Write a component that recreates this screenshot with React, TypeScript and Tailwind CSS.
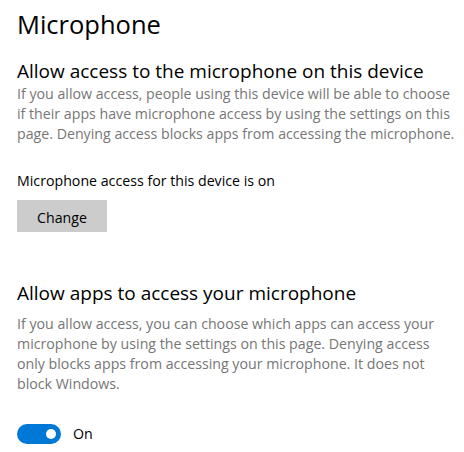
const App = () => {
  return (
    <div
      className="w-[464px] h-[452px] bg-white pl-[17px] pt-[4px] text-black overflow-hidden"
      style={{ fontFamily: '"Open Sans", "Noto Sans", sans-serif' }}
    >
      <h1 className="text-[25.5px] leading-[40px]">Microphone</h1>

      <h2 className="mt-[14px] text-[19px] leading-[26px]">
        Allow access to the microphone on this device
      </h2>
      <p className="whitespace-nowrap text-[14.2px] leading-[20px] text-[#767676]">
        If you allow access, people using this device will be able to choose
        <br />
        if their apps have microphone access by using the settings on this
        <br />
        page. Denying access blocks apps from accessing the microphone.
      </p>

      <p className="mt-[27px] text-[14.2px] leading-[20px]">
        Microphone access for this device is on
      </p>
      <button className="mt-[9px] flex w-[90px] h-[32px] items-center justify-center bg-[#cccccc] pt-[4px] text-[14.2px] text-black">
        Change
      </button>

      <h2 className="mt-[48px] text-[19px] leading-[26px]">
        Allow apps to access your microphone
      </h2>
      <p className="mt-[8px] whitespace-nowrap text-[14.2px] leading-[20px] text-[#767676]">
        If you allow access, you can choose which apps can access your
        <br />
        microphone by using the settings on this page. Denying access
        <br />
        only blocks apps from accessing your microphone. It does not
        <br />
        block Windows.
      </p>

      <div className="mt-[30px] flex items-center gap-[12px]">
        <div className="relative w-[44px] h-[20px] rounded-full bg-[#0078d7]">
          <span className="absolute right-[5px] top-[5px] w-[10px] h-[10px] rounded-full bg-white" />
        </div>
        <span className="text-[14.2px] leading-[20px]">On</span>
      </div>
    </div>
  );
};

export default App;
